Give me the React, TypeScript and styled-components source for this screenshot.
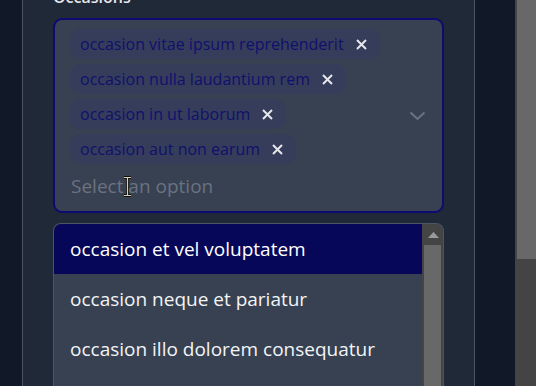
import React from 'react'
import styled, { createGlobalStyle } from 'styled-components'

const GlobalStyle = createGlobalStyle`
  html, body {
    margin: 0;
    padding: 0;
    background: #111827;
    overflow: hidden;
  }
  body {
    font-family: "Open Sans", "Noto Sans", sans-serif;
  }
`

const Page = styled.div`
  display: flex;
  width: 536px;
  height: 386px;
  overflow: hidden;
  background: #111827;
`

const SideStrip = styled.div`
  width: 22px;
  flex: none;
  background: #111827;
  border-right: 1px solid #4b5563;
`

const Panel = styled.div`
  width: 391px;
  flex: none;
  padding: 0 30px;
  background: #1f2937;
  border-right: 1px solid #4b5563;
  display: flex;
  flex-direction: column;
  & > * {
    flex: none;
  }
`

const Gutter = styled.div`
  flex: 1;
  background: #111827;
`

const PageScroll = styled.div`
  width: 21px;
  flex: none;
  background: #444444;
  display: flex;
  flex-direction: column;
  padding-left: 2px;
  box-sizing: border-box;
`

const PageThumb = styled.div`
  height: 259px;
  background: #686868;
`

const Label = styled.div`
  margin-top: -13px;
  font-size: 16px;
  line-height: 20px;
  font-weight: 600;
  color: #e5e7eb;
`

const SelectBox = styled.div`
  position: relative;
  margin-top: 11px;
  height: 191px;
  border: 2px solid #0b0b72;
  border-radius: 9px;
  background: #374151;
  display: flex;
  align-items: center;
`

const ValueArea = styled.div`
  flex: 1;
  display: flex;
  flex-direction: column;
  align-items: flex-start;
  gap: 5px;
  padding: 9px 0 0 15px;
  align-self: stretch;
`

const Chip = styled.div`
  display: flex;
  align-items: center;
  gap: 12px;
  height: 30px;
  padding: 0 13px 0 10px;
  border-radius: 10px;
  background: #363d5a;
  color: #10106e;
  font-size: 16px;
`

const Remove = styled.svg`
  width: 11px;
  height: 11px;
  flex: none;
`

const Placeholder = styled.div`
  position: relative;
  height: 34px;
  display: flex;
  align-items: center;
  padding-left: 1px;
  font-size: 19px;
  color: #6b7280;
`

const Cursor = styled.svg`
  position: absolute;
  left: 53px;
  top: 7px;
  width: 9px;
  height: 21px;
`

const Chevron = styled.svg`
  width: 17px;
  height: 10px;
  margin: 0 16px 0 10px;
  flex: none;
`

const ListBox = styled.div`
  margin-top: 10px;
  height: 200px;
  border: 1px solid #4b5563;
  border-bottom: none;
  border-radius: 8px 8px 0 0;
  background: #374151;
  display: flex;
  overflow: hidden;
`

const Options = styled.div`
  flex: 1;
  display: flex;
  flex-direction: column;
`

const Option = styled.div<{ $active?: boolean }>`
  height: 50px;
  flex: none;
  display: flex;
  align-items: center;
  padding-left: 16px;
  font-size: 19px;
  color: ${p => (p.$active ? '#ffffff' : '#f3f4f6')};
  background: ${p => (p.$active ? '#070759' : 'transparent')};
`

const ListScroll = styled.div`
  width: 21px;
  flex: none;
  background: #444444;
  display: flex;
  flex-direction: column;
  align-items: flex-end;
`

const ScrollArrow = styled.div`
  width: 19px;
  height: 21px;
  display: flex;
  align-items: center;
  justify-content: center;
`

const ListThumb = styled.div`
  width: 17px;
  margin-right: 2px;
  flex: 1;
  background: #686868;
`

const chips = [
  'occasion vitae ipsum reprehenderit',
  'occasion nulla laudantium rem',
  'occasion in ut laborum',
  'occasion aut non earum',
]

const options = [
  'occasion et vel voluptatem',
  'occasion neque et pariatur',
  'occasion illo dolorem consequatur',
  'occasion quia sed',
]

export default function App() {
  return (
    <>
      <GlobalStyle />
      <Page>
        <SideStrip />
        <Panel>
          <Label>Occasions</Label>
          <SelectBox>
            <ValueArea>
              {chips.map(c => (
                <Chip key={c}>
                  {c}
                  <Remove viewBox="0 0 11 11">
                    <path d="M1 1L10 10M10 1L1 10" stroke="#e5e7eb" strokeWidth="2" />
                  </Remove>
                </Chip>
              ))}
              <Placeholder>
                Select an option
                <Cursor viewBox="0 0 9 21">
                  <path d="M1 1.5h7M4.5 1.5v18M1 19.5h7" stroke="#111" strokeWidth="3" fill="none" />
                  <path d="M1 1.5h7M4.5 1.5v18M1 19.5h7" stroke="#d8d0b8" strokeWidth="1.2" fill="none" />
                </Cursor>
              </Placeholder>
            </ValueArea>
            <Chevron viewBox="0 0 17 10">
              <path d="M1.5 1.5L8.5 8L15.5 1.5" stroke="#6b7280" strokeWidth="2" fill="none" />
            </Chevron>
          </SelectBox>
          <ListBox>
            <Options>
              {options.map((o, i) => (
                <Option key={o} $active={i === 0}>{o}</Option>
              ))}
            </Options>
            <ListScroll>
              <ScrollArrow>
                <svg width="11" height="6" viewBox="0 0 11 6">
                  <path d="M0 6L5.5 0L11 6Z" fill="#9a9a9a" />
                </svg>
              </ScrollArrow>
              <ListThumb />
            </ListScroll>
          </ListBox>
        </Panel>
        <Gutter />
        <PageScroll>
          <PageThumb />
        </PageScroll>
      </Page>
    </>
  )
}
